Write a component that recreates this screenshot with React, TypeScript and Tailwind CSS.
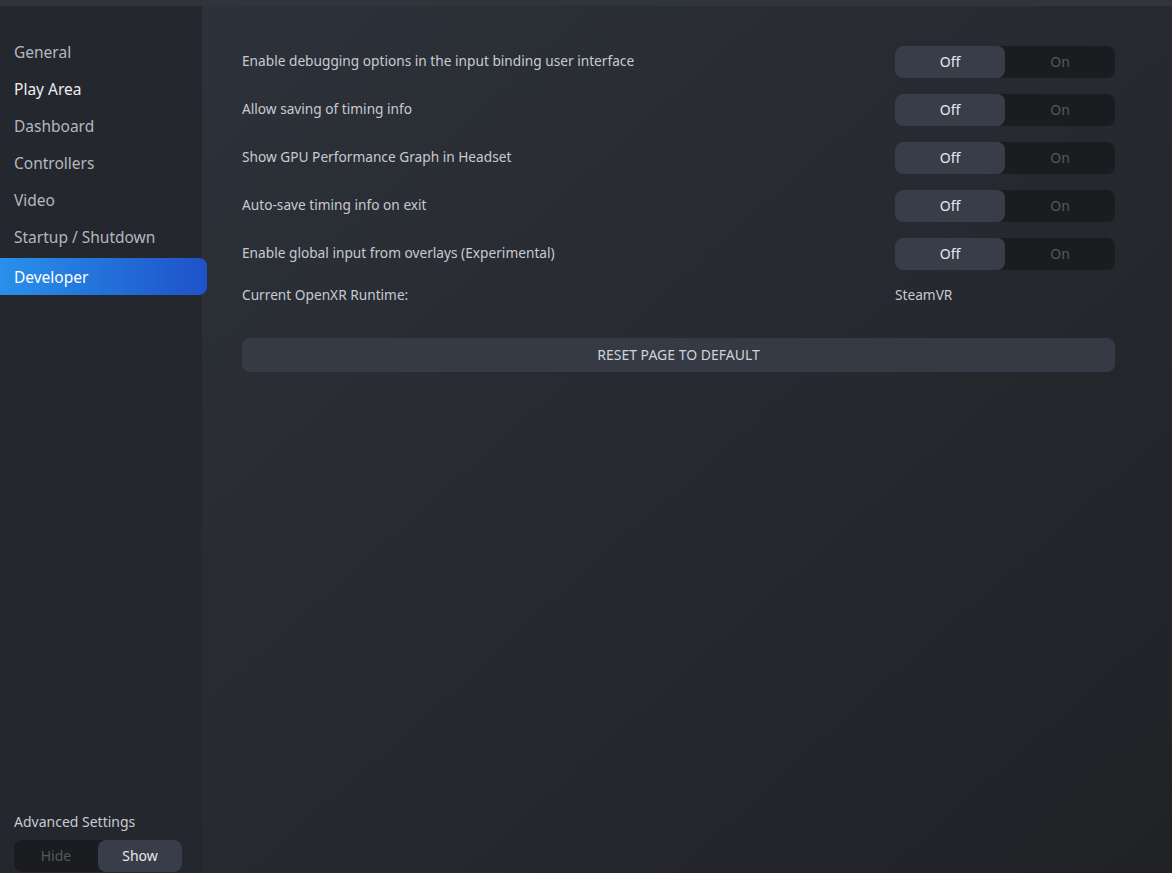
import { useState } from "react";

const navItems = [
  "General",
  "Play Area",
  "Dashboard",
  "Controllers",
  "Video",
  "Startup / Shutdown",
  "Developer",
];

const toggles = [
  "Enable debugging options in the input binding user interface",
  "Allow saving of timing info",
  "Show GPU Performance Graph in Headset",
  "Auto-save timing info on exit",
  "Enable global input from overlays (Experimental)",
];

function Toggle({ on, offLabel, onLabel, className }: { on: boolean; offLabel: string; onLabel: string; className: string }) {
  return (
    <div className={`flex rounded-lg bg-[#1a1c20] pb-[2px] text-[14px] ${className}`}>
      <div
        className={`-mb-[2px] flex flex-1 items-center justify-center rounded-lg pb-[2px] ${
          on ? "text-[#55595f]" : "bg-[#383d49] text-[#e6e9ee]"
        }`}
      >
        {offLabel}
      </div>
      <div
        className={`-mb-[2px] flex flex-1 items-center justify-center rounded-lg pb-[2px] ${
          on ? "bg-[#383d49] text-[#e6e9ee]" : "text-[#55595f]"
        }`}
      >
        {onLabel}
      </div>
    </div>
  );
}

export default function App() {
  const [active] = useState("Developer");

  return (
    <div className="flex h-[873px] w-[1172px] flex-col overflow-hidden bg-[#30343b] font-['Noto_Sans',sans-serif]">
      <div className="h-[6px] shrink-0" />
      <div className="flex min-h-0 flex-1">
        {/* Sidebar */}
        <div className="relative z-10 flex w-[202px] shrink-0 flex-col bg-[#24272d] pt-[27px]">
          {navItems.map((item) => (
            <div
              key={item}
              className={`flex h-[37px] items-center pl-[14px] pt-[2px] text-[15.5px] ${
                item === active
                  ? "mr-[-5px] mt-[3px] rounded-r-lg bg-gradient-to-r from-[#2a90ea] to-[#1f52c9] text-white"
                  : item === "Play Area"
                  ? "text-[#eceef1]"
                  : "text-[#b4b8be]"
              }`}
            >
              {item}
            </div>
          ))}
          <div className="mt-auto px-[14px] pb-px">
            <div className="mb-[8px] text-[14px] text-[#c9ccd1]">Advanced Settings</div>
            <Toggle on offLabel="Hide" onLabel="Show" className="h-[32px] w-[168px]" />
          </div>
        </div>

        {/* Main */}
        <div className="flex flex-1 flex-col bg-gradient-to-br from-[#2d3139] to-[#202226] pl-[40px] pr-[57px] pt-[40px]">
          {toggles.map((label) => (
            <div key={label} className="mb-[16px] flex h-[32px] items-center">
              <div className="flex-1 pb-[1px] text-[13.7px] text-[#c7cbd1]">{label}</div>
              <Toggle on={false} offLabel="Off" onLabel="On" className="h-[32px] w-[220px]" />
            </div>
          ))}
          <div className="flex h-[18px] items-center text-[13.7px] text-[#c7cbd1]">
            <div className="flex-1">Current OpenXR Runtime:</div>
            <div className="w-[220px]">SteamVR</div>
          </div>
          <button className="mt-[34px] flex h-[34px] items-center justify-center rounded-lg bg-[#353a45] pb-[2px] text-[14px] text-[#d0d3d8]">
            RESET PAGE TO DEFAULT
          </button>
        </div>
      </div>
    </div>
  );
}
